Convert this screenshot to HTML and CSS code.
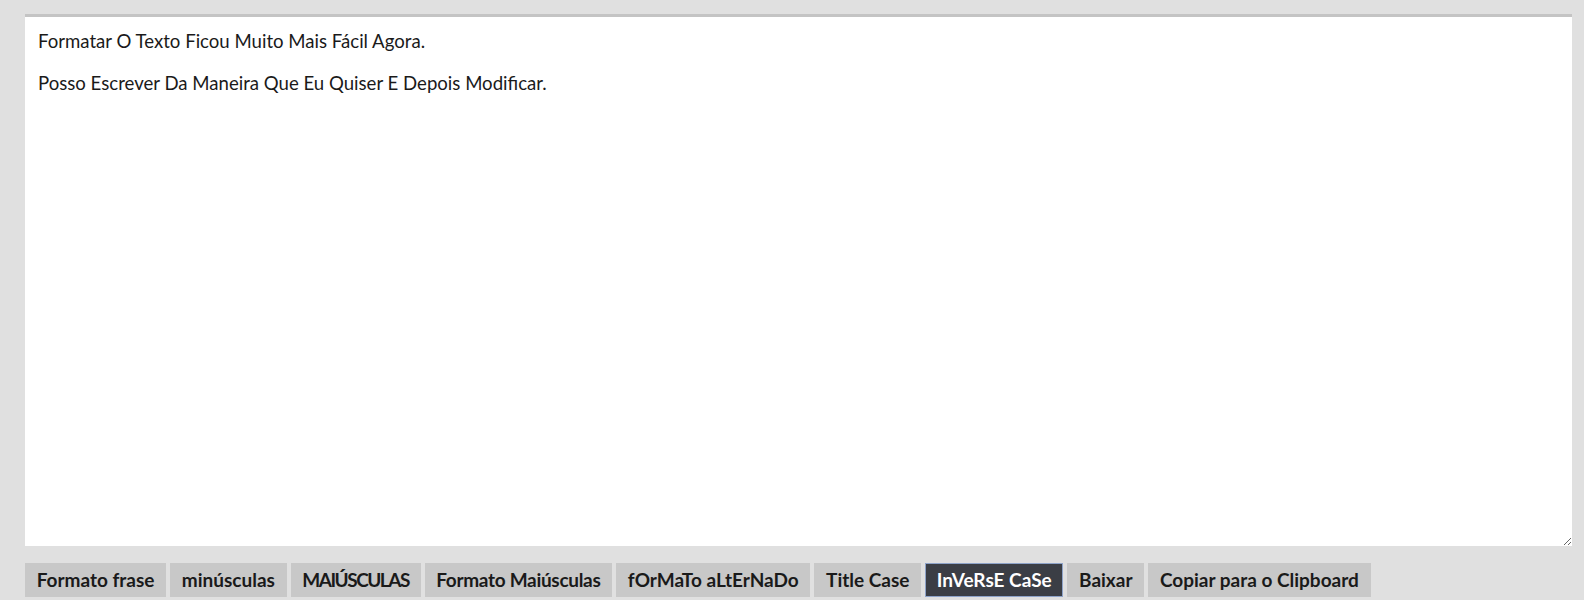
FILE: index.html
```html
<!DOCTYPE html>
<html lang="pt">
<head>
<meta charset="utf-8">
<title>Conversor de Texto</title>
<link rel="stylesheet" href="styles.css">
</head>
<body>
<main class="tool">
<textarea class="editor" spellcheck="false">Formatar O Texto Ficou Muito Mais Fácil Agora.

Posso Escrever Da Maneira Que Eu Quiser E Depois Modificar.</textarea>
<div class="actions">
<button class="btn">Formato frase</button>
<button class="btn">minúsculas</button>
<button class="btn btn-caps">MAIÚSCULAS</button>
<button class="btn btn-tight">Formato Maiúsculas</button>
<button class="btn">fOrMaTo aLtErNaDo</button>
<button class="btn">Title Case</button>
<button class="btn btn-active">InVeRsE CaSe</button>
<button class="btn">Baixar</button>
<button class="btn">Copiar para o Clipboard</button>
</div>
</main>
</body>
</html>
```
FILE: styles.css
```css
html, body {
  margin: 0;
  background: #e0e0e0;
}
.tool {
  padding: 14px 0 0 25px;
}
.editor {
  display: block;
  box-sizing: border-box;
  width: 1547px;
  height: 532px;
  margin: 0;
  border: 0;
  border-top: 3px solid #c4c4c4;
  background: #fff;
  padding: 14px 13px;
  font-family: Lato, "Open Sans", sans-serif;
  font-size: 18.6px;
  line-height: 21px;
  color: #1a1a1a;
  outline: none;
  resize: both;
}
.actions {
  display: flex;
  gap: 4px;
  margin-top: 17px;
}
.btn {
  box-sizing: border-box;
  height: 34px;
  padding: 0 10.7px;
  border: 1px solid #c8c8c8;
  background: #c8c8c8;
  color: #1a1a1a;
  font-family: Lato, "Open Sans", sans-serif;
  font-weight: bold;
  font-size: 19px;
  line-height: 32px;
  cursor: pointer;
}
.btn-caps {
  letter-spacing: -1.5px;
}
.btn-tight {
  letter-spacing: -0.3px;
}
.btn-active {
  background: #3b3e45;
  border-color: #8ea3c9;
  color: #fff;
}
```
